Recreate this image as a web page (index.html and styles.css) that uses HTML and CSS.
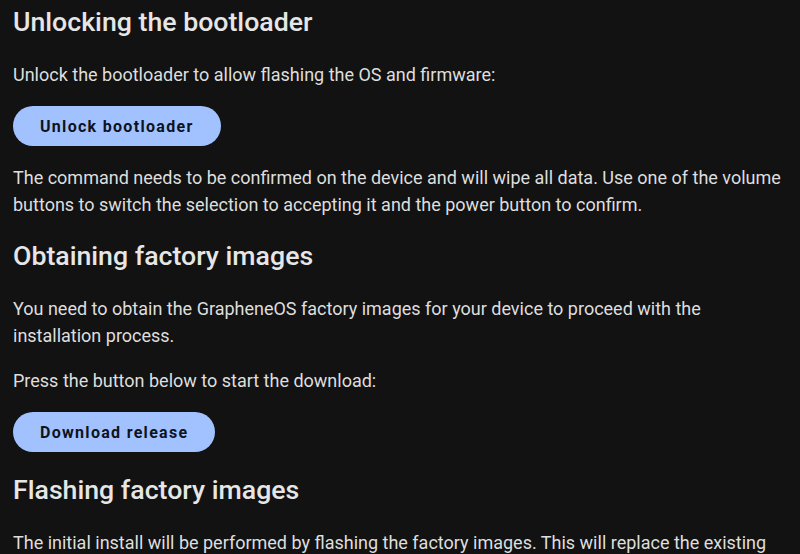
FILE: index.html
```html
<!DOCTYPE html>
<html>
<head>
<meta charset="utf-8">
<link rel="stylesheet" href="styles.css">
</head>
<body>
<main class="content">
  <h2 class="title">Unlocking the bootloader</h2>
  <p class="text">Unlock the bootloader to allow flashing the OS and firmware:</p>
  <div class="action"><button class="btn">Unlock bootloader</button></div>
  <p class="text">The command needs to be confirmed on the device and will wipe all data. Use one of the volume buttons to switch the selection to accepting it and the power button to confirm.</p>
  <h2 class="title">Obtaining factory images</h2>
  <p class="text">You need to obtain the GrapheneOS factory images for your device to proceed with the installation process.</p>
  <p class="text">Press the button below to start the download:</p>
  <div class="action"><button class="btn">Download release</button></div>
  <h2 class="title">Flashing factory images</h2>
  <p class="text">The initial install will be performed by flashing the factory images. This will replace the existing OS installation and wipe all the existing data.</p>
</main>
</body>
</html>
```

FILE: styles.css
```css
html, body {
  margin: 0;
  padding: 0;
  background: #121212;
  overflow: hidden;
}
body {
  font-family: Roboto, "Noto Sans", sans-serif;
  color: #dedede;
}
.content {
  padding: 8px 13px 0 13px;
  display: flow-root;
}
.title {
  font-size: 26.7px;
  font-weight: 500;
  line-height: 29px;
  color: #e6e6e6;
  margin: 24px 0 24px;
}
.content > .title:first-child {
  margin-top: 0;
}
.text {
  font-size: 18px;
  line-height: 27px;
  margin: 18px 0;
}
.action {
  margin: 18px 0 14px;
}
.btn {
  height: 40px;
  padding: 0 27px;
  border: none;
  border-radius: 20px;
  background: #a2c2ff;
  color: #0e1320;
  font-family: Roboto, "Noto Sans", sans-serif;
  font-size: 16px;
  font-weight: 700;
  letter-spacing: 1.3px;
  display: block;
}
```
